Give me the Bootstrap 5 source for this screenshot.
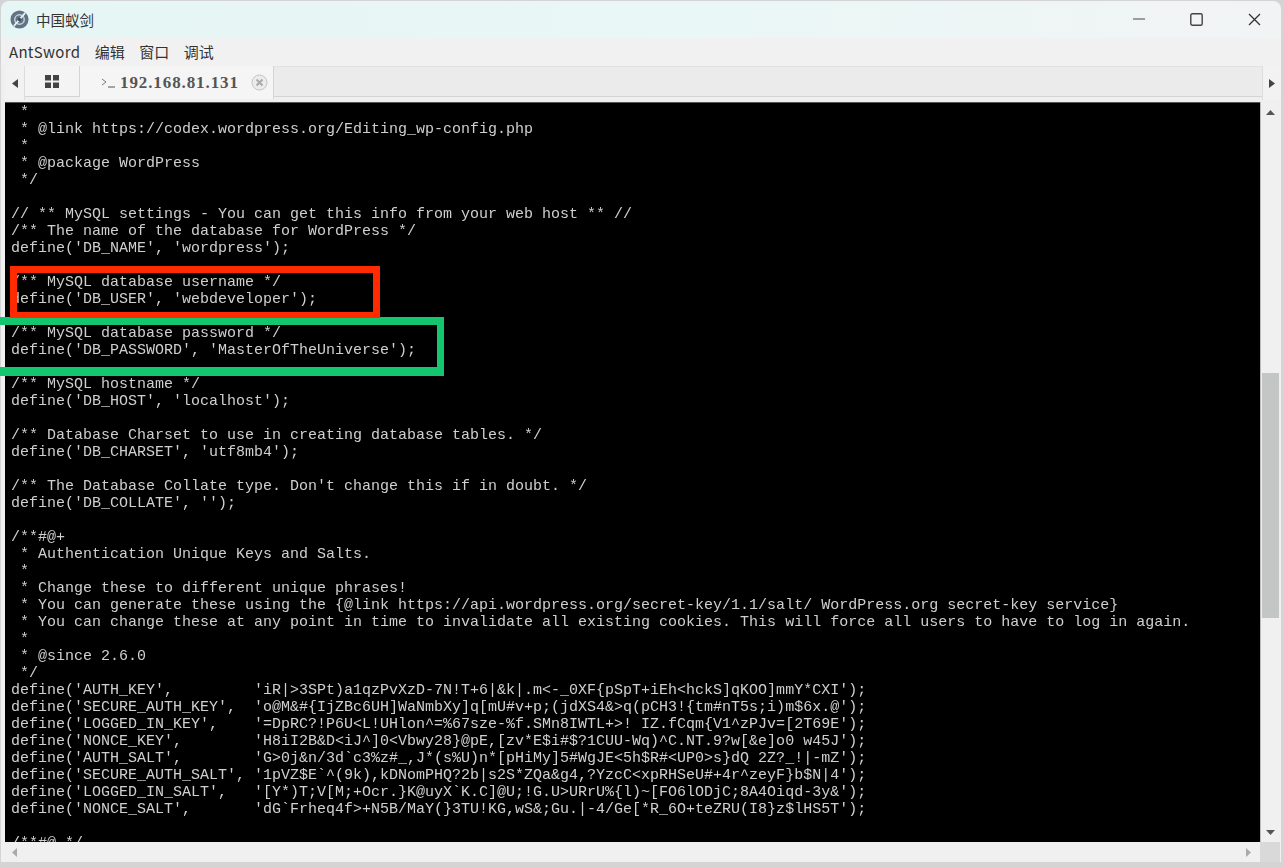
<!doctype html>
<html lang="zh">
<head>
<meta charset="utf-8">
<title>中国蚁剑</title>
<link rel="stylesheet" href="https://cdn.jsdelivr.net/npm/bootstrap@5.3.0/dist/css/bootstrap.min.css">
<style>
html,body{height:100%;margin:0;background:#d9d9d9;overflow:hidden}
.app-win{height:867px;width:1284px;padding:1px 3px 3px 1px;background:#d4d4d4}
.app-inner{height:100%}
.title-strip{height:37px;border-radius:8px 8px 0 0;background:linear-gradient(90deg,#e6f6f5 0,#e9f7f6 55%,#f2f4f4 100%);padding:0 0 1px 9px;font:14.5px "Noto Sans CJK SC",sans-serif;color:#333}
.title-logo{margin-right:7px}
.win-btns{gap:45px;padding-right:20px}
.menu-strip{height:28px;padding:0 0 2px 8px;gap:14.5px;font:15px "Noto Sans CJK SC","Liberation Sans",sans-serif;color:#333;background:#f1f1f1}
.menu-name{letter-spacing:.3px}
.tab-strip{height:36px;padding:0 0 0 4px;background:#efefef}
.tab-arrow{width:20px;height:34px;background:#f2f2f2;border-right:1px solid #ddd}
.tab-home{width:55px;height:31px;background:#f4f4f4;border-right:1px solid #d4d4d4;border-bottom:1px solid #d4d4d4}
.tab-live{width:194px;height:33px;background:#f5f5f5;border-right:1px solid #d4d4d4;padding-left:21px;gap:4px;color:#555;font:700 17px "Liberation Serif",serif;letter-spacing:.9px}
.tab-fill{height:31px;background:#ebebeb;border-bottom:1px solid #d4d4d4;border-top:1px solid #e2e2e2}
.tab-end{width:19px;height:34px;background:#f2f2f2;border-left:1px solid #ddd}
.work-area{height:740px;padding-left:4px;background:#f0f0f0}
.term-view{font:15px/17px "Liberation Mono",monospace;color:#cfcfcf;background:#000;margin:0;border-top:1px solid #555;position:relative;width:1255px}
.term-view pre{font:inherit;color:inherit;margin:0;padding:1px 0 0 6px;overflow:hidden;height:739px;filter:blur(.45px);white-space:pre}
.mark-red{position:absolute;left:5px;top:163px;width:370px;height:52px;border:solid #ff2a00;border-width:7px 7px 6px}
.mark-green{position:absolute;left:-5px;top:214px;width:444px;height:59px;border:solid #14c76f;border-width:8px 7px 9px 0}
.scroll-y{width:20px;background:#f0f0f0;border-left:1px solid #bbb}
.scroll-track{position:relative}
.scroll-thumb{position:absolute;left:1px;right:1px;top:251px;height:245px;background:#c4c6c5}
.scroll-btn{height:20px}
.scroll-x{height:20px;padding-left:4px;background:#f0f0f0}
.scroll-x-track{width:1255px;padding:0 9px 0 7px}
.scroll-corner{width:20px;height:20px;background:#d9d9d9}
</style>
</head>
<body>
<div class="app-win">
<div class="app-inner d-flex flex-column">
  <div class="title-strip d-flex align-items-center flex-shrink-0">
    <svg class="title-logo" width="19" height="19" viewBox="0 0 20 20"><circle cx="10" cy="10" r="9.500" fill="#5f7484"/><circle cx="10" cy="10" r="5" fill="none" stroke="#c9d3da" stroke-width="1.500"/><path d="M4 17 16 3" stroke="#eef2f5" stroke-width="1.700"/><circle cx="10" cy="10" r="1.800" fill="#3f4f5b"/></svg>
    <span>中国蚁剑</span>
    <div class="win-btns d-flex align-items-center ms-auto">
      <svg width="12" height="12" viewBox="0 0 12 12"><path d="M0 6h12" stroke="#777" stroke-width="1.400"/></svg>
      <svg width="13" height="13" viewBox="0 0 13 13"><rect x=".8" y=".8" width="11.400" height="11.400" rx="1.500" fill="none" stroke="#444" stroke-width="1.400"/></svg>
      <svg width="13" height="13" viewBox="0 0 13 13"><path d="M1 1l11 11M12 1 1 12" stroke="#333" stroke-width="1.300"/></svg>
    </div>
  </div>
  <div class="menu-strip d-flex align-items-center flex-shrink-0">
    <span class="menu-name">AntSword</span><span>编辑</span><span>窗口</span><span>调试</span>
  </div>
  <div class="tab-strip d-flex flex-shrink-0">
    <div class="tab-arrow d-flex align-items-center justify-content-center"><svg width="6" height="9" viewBox="0 0 6 9"><path d="M6 0v9L0 4.500z" fill="#444"/></svg></div>
    <div class="tab-home d-flex align-items-center justify-content-center"><svg width="14" height="13" viewBox="0 0 14 13"><path d="M0 0h6v5.500H0zM8 0h6v5.500H8zM0 7.500h6V13H0zM8 7.500h6V13H8z" fill="#444"/></svg></div>
    <div class="tab-live d-flex align-items-center">
      <svg width="15" height="12" viewBox="0 0 15 12"><path d="M1 2l4 3-4 3" fill="none" stroke="#777" stroke-width="1"/><path d="M7 10h7" stroke="#555" stroke-width="1"/></svg>
      <span>192.168.81.131</span>
      <svg class="ms-2" width="17" height="17" viewBox="0 0 17 17"><circle cx="8.500" cy="8.500" r="7.500" fill="#ececec" stroke="#c4c4c4"/><path d="M5.500 5.500l6 6M11.500 5.500l-6 6" stroke="#aaa" stroke-width="2"/></svg>
    </div>
    <div class="tab-fill flex-grow-1"></div>
    <div class="tab-end d-flex align-items-center justify-content-center"><svg width="6" height="9" viewBox="0 0 6 9"><path d="M0 0v9l6-4.500z" fill="#444"/></svg></div>
  </div>
  <div class="work-area d-flex flex-shrink-0">
    <div class="term-view"><pre> *
 * @link https://codex.wordpress.org/Editing_wp-config.php
 *
 * @package WordPress
 */

// ** MySQL settings - You can get this info from your web host ** //
/** The name of the database for WordPress */
define('DB_NAME', 'wordpress');

/** MySQL database username */
define('DB_USER', 'webdeveloper');

/** MySQL database password */
define('DB_PASSWORD', 'MasterOfTheUniverse');

/** MySQL hostname */
define('DB_HOST', 'localhost');

/** Database Charset to use in creating database tables. */
define('DB_CHARSET', 'utf8mb4');

/** The Database Collate type. Don't change this if in doubt. */
define('DB_COLLATE', '');

/**#@+
 * Authentication Unique Keys and Salts.
 *
 * Change these to different unique phrases!
 * You can generate these using the {@link https://api.wordpress.org/secret-key/1.1/salt/ WordPress.org secret-key service}
 * You can change these at any point in time to invalidate all existing cookies. This will force all users to have to log in again.
 *
 * @since 2.6.0
 */
define('AUTH_KEY',         'iR|&gt;3SPt)a1qzPvXzD-7N!T+6|&amp;k|.m&lt;-_0XF{pSpT+iEh&lt;hckS]qKOO]mmY*CXI');
define('SECURE_AUTH_KEY',  'o@M&amp;#{IjZBc6UH]WaNmbXy]q[mU#v+p;(jdXS4&amp;&gt;q(pCH3!{tm#nT5s;i)m$6x.@');
define('LOGGED_IN_KEY',    '=DpRC?!P6U&lt;L!UHlon^=%67sze-%f.SMn8IWTL+&gt;! IZ.fCqm{V1^zPJv=[2T69E');
define('NONCE_KEY',        'H8iI2B&amp;D&lt;iJ^]0&lt;Vbwy28}@pE,[zv*E$i#$?1CUU-Wq)^C.NT.9?w[&amp;e]o0 w45J');
define('AUTH_SALT',        'G&gt;0j&amp;n/3d`c3%z#_,J*(s%U)n*[pHiMy]5#WgJE&lt;5h$R#&lt;UP0&gt;s}dQ 2Z?_!|-mZ');
define('SECURE_AUTH_SALT', '1pVZ$E`^(9k),kDNomPHQ?2b|s2S*ZQa&amp;g4,?YzcC&lt;xpRHSeU#+4r^zeyF}b$N|4');
define('LOGGED_IN_SALT',   '[Y*)T;V[M;+Ocr.}K@uyX`K.C]@U;!G.U&gt;URrU%{l)~[FO6lODjC;8A4Oiqd-3y&amp;');
define('NONCE_SALT',       'dG`Frheq4f&gt;+N5B/MaY(}3TU!KG,wS&amp;;Gu.|-4/Ge[*R_6O+teZRU(I8}z$lHS5T');

/**#@-*/</pre><div class="mark-green"></div><div class="mark-red"></div></div>
    <div class="scroll-y d-flex flex-column">
      <div class="scroll-btn d-flex justify-content-center align-items-center"><svg width="9" height="5" viewBox="0 0 9 5"><path d="M0 5h9L4.500 0z" fill="#555"/></svg></div>
      <div class="scroll-track flex-grow-1"><div class="scroll-thumb"></div></div>
      <div class="scroll-btn d-flex justify-content-center align-items-center"><svg width="9" height="5" viewBox="0 0 9 5"><path d="M0 0h9L4.500 5z" fill="#555"/></svg></div>
    </div>
  </div>
  <div class="scroll-x d-flex flex-shrink-0">
    <div class="scroll-x-track d-flex align-items-center justify-content-between">
      <svg width="5" height="9" viewBox="0 0 5 9"><path d="M5 0v9L0 4.500z" fill="#aaa"/></svg>
      <svg width="5" height="9" viewBox="0 0 5 9"><path d="M0 0v9l5-4.500z" fill="#aaa"/></svg>
    </div>
    <div class="scroll-corner"></div>
  </div>
</div>
</div>
<script src="https://cdn.jsdelivr.net/npm/bootstrap@5.3.0/dist/js/bootstrap.bundle.min.js"></script>
</body>
</html>
